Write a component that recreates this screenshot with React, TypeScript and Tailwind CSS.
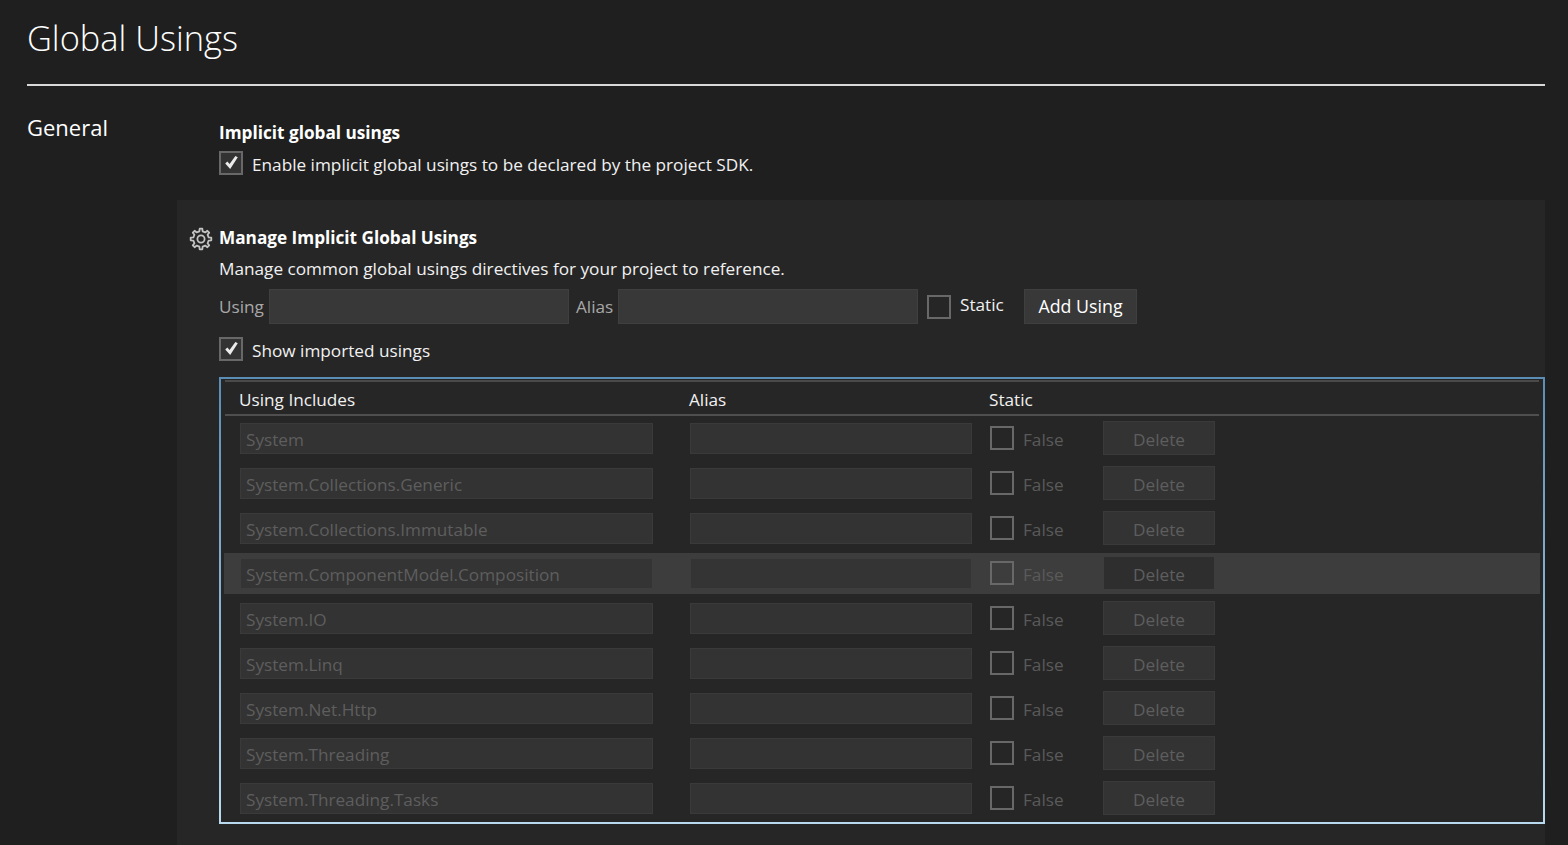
const usings = [
  "System",
  "System.Collections.Generic",
  "System.Collections.Immutable",
  "System.ComponentModel.Composition",
  "System.IO",
  "System.Linq",
  "System.Net.Http",
  "System.Threading",
  "System.Threading.Tasks",
];

function gearPath() {
  const cx = 12, cy = 12, teeth = 8;
  const pts: string[] = [];
  for (let i = 0; i < teeth; i++) {
    const a = (i * 2 * Math.PI) / teeth - Math.PI / 2;
    const step = (2 * Math.PI) / teeth;
    const p = (r: number, d: number) => {
      const t = a + d * step;
      return `${(cx + r * Math.cos(t)).toFixed(2)} ${(cy + r * Math.sin(t)).toFixed(2)}`;
    };
    pts.push(p(7.8, -0.27), p(10.4, -0.16), p(10.4, 0.16), p(7.8, 0.27));
  }
  return `M${pts.join(" L")} Z`;
}

function Gear({ className }: { className?: string }) {
  return (
    <svg width="24" height="24" viewBox="0 0 24 24" fill="none" stroke="#c4c4c4" strokeWidth="1.8" strokeLinejoin="round" className={className}>
      <path d={gearPath()} />
      <circle cx="12" cy="12" r="3.6" />
    </svg>
  );
}

function Check({ checked }: { checked?: boolean }) {
  return (
    <span className={`flex h-[24px] w-[24px] shrink-0 items-center justify-center border-2 border-[#686868] ${checked ? "bg-[#333333]" : ""}`}>
      {checked && (
        <svg width="13" height="13" viewBox="0 0 12 12" className="-translate-y-[1px]">
          <path d="M0.2 7 L2.2 5 L4.2 7.4 L9.6 0 L11.8 1.2 L4.8 12 Z" fill="#ececec" />
        </svg>
      )}
    </span>
  );
}

export default function App() {
  return (
    <div className="h-[845px] overflow-hidden bg-[#1f1f1f] pl-[27px] pr-[23px] font-['Open_Sans',sans-serif] text-[17.2px] text-[#f1f1f1]">
      <h1 className="h-[84px] pt-[13px] text-[34.4px] font-light leading-[50px] text-white">Global Usings</h1>
      <div className="h-[2px] bg-[#d9d9d9]" />
      <div className="flex">
        <div className="w-[150px] shrink-0 pt-[26px] text-[22px] leading-[30px] text-white">General</div>
        <div className="min-w-0 flex-1">
          <div className="h-[114px] pl-[42px] pt-[35px]">
            <div className="font-bold leading-[24px] text-white">Implicit global usings</div>
            <label className="mt-[6px] flex items-center gap-[9px]">
              <Check checked />
              <span className="translate-y-[2px] leading-[24px]">Enable implicit global usings to be declared by the project SDK.</span>
            </label>
          </div>
          <div className="h-[645px] bg-[#262626] pl-[42px] pt-[26px]">
            <div className="relative font-bold leading-[24px] text-white">
              <Gear className="absolute left-[-30px] top-[1px]" />
              Manage Implicit Global Usings
            </div>
            <div className="mt-[7px] leading-[24px]">Manage common global usings directives for your project to reference.</div>
            <div className="mt-[8px] flex h-[35px] items-center">
              <span className="w-[50px] text-[#a8a8a8]">Using</span>
              <div className="h-[35px] w-[300px] border border-[#3f3f3f] bg-[#383838]" />
              <span className="ml-[7px] w-[42px] text-[#a8a8a8]">Alias</span>
              <div className="h-[35px] w-[300px] border border-[#3f3f3f] bg-[#383838]" />
              <span className="ml-[9px]"><Check /></span>
              <span className="ml-[9px] w-[64px] -translate-y-[2px]">Static</span>
              <button className="flex h-[35px] w-[113px] items-center justify-center border border-[#3f3f3f] bg-[#383838] text-[17.8px] text-white">Add Using</button>
            </div>
            <label className="mt-[13px] flex items-center gap-[9px]">
              <Check checked />
              <span className="translate-y-[2px] leading-[24px]">Show imported usings</span>
            </label>
            <div className="mt-[16px] h-[447px] border-2 [border-image:linear-gradient(180deg,#5b8db5,#b9d9ee)_1] px-[3px]">
              <div className="mx-[1px] mt-[1px] flex h-[36px] items-center border-y-2 border-t-[#4a4a4a] border-b-[#4f4f4f] pt-[3px]">
                <span className="ml-[14px] w-[450px]">Using Includes</span>
                <span className="w-[300px]">Alias</span>
                <span>Static</span>
              </div>
              <div className="mt-[2px] flex flex-col gap-[4px]">
                {usings.map((u, i) => {
                  const hi = i === 3;
                  return (
                    <div key={u} className={`flex h-[41px] items-center ${hi ? "bg-[#3d3d3d]" : ""}`}>
                      <div className={`ml-[16px] flex h-[31px] w-[413px] items-center border px-[5px] pt-[2px] ${hi ? "border-[#3d3d3d] bg-[#343434]" : "border-[#3a3a3a] bg-[#333333]"} text-[#5e5e5e]`}>{u}</div>
                      <div className={`ml-[37px] h-[31px] w-[282px] border ${hi ? "border-[#3d3d3d] bg-[#343434]" : "border-[#3a3a3a] bg-[#333333]"}`} />
                      <span className="ml-[18px] -translate-y-[1px]"><Check /></span>
                      <span className="ml-[9px] w-[80px] translate-y-[1px] text-[#5a5a5a]">False</span>
                      <div className={`flex h-[34px] w-[112px] -translate-y-[1px] items-center justify-center border pt-[5px] text-[#5e5e5e] ${hi ? "border-[#3d3d3d] bg-[#2e2e2e]" : "border-[#3a3a3a] bg-[#333333]"}`}>Delete</div>
                    </div>
                  );
                })}
              </div>
            </div>
          </div>
        </div>
      </div>
    </div>
  );
}
